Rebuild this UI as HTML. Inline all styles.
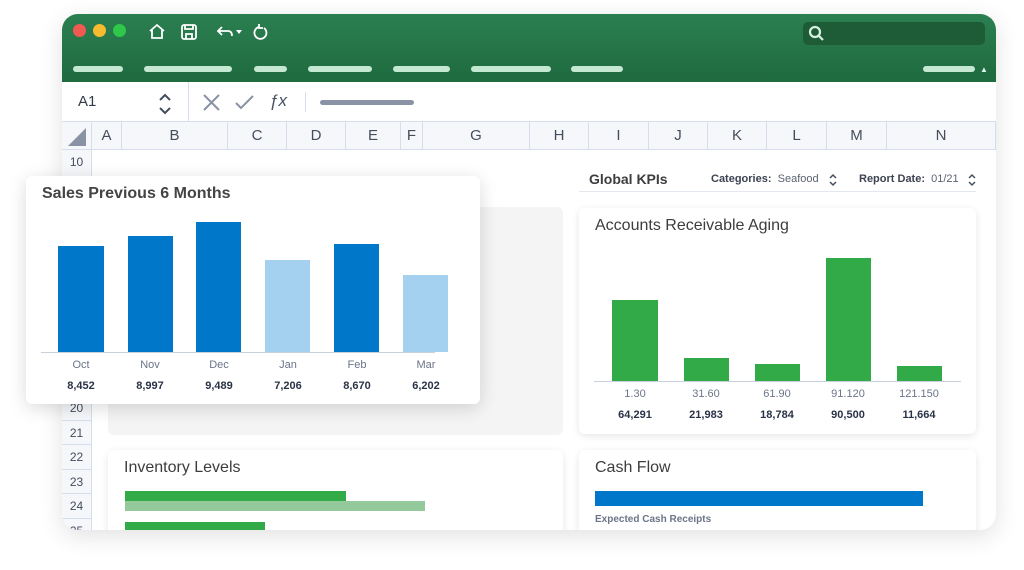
<!DOCTYPE html>
<html><head><meta charset="utf-8"><style>
*{margin:0;padding:0;box-sizing:border-box}
body{width:1024px;height:570px;background:#fff;position:relative;overflow:hidden;font-family:"Liberation Sans",sans-serif}
.a{position:absolute}
.win{left:62px;top:14px;width:934px;height:516px;border-radius:16px;background:#fff;box-shadow:0 6px 24px rgba(0,0,0,.12);overflow:hidden}
.hdr{left:0;top:0;width:934px;height:68px;background:linear-gradient(#2b7f51,#1f6a3f)}
.pill{height:6px;border-radius:3px;background:#c4e8d1;top:52px}
.col{top:108px;height:28px;border-right:1px solid #d6deeb;border-bottom:1px solid #d6deeb;background:#f5f7fb;font-size:15px;color:#444d5c;text-align:center;line-height:28px}
.rn{left:0;width:30px;height:24.5px;border-right:1px solid #d6deeb;border-bottom:1px solid #d6deeb;background:#f5f7fb;font-size:12px;color:#444d5c;text-align:center;line-height:24px}
.card{background:#fff;border-radius:6px;box-shadow:0 2px 8px rgba(0,0,0,.1)}
.t{font-size:16px;color:#3d3d3d}
.bar{position:absolute}
.lab{position:absolute;font-size:11px;color:#6b7488;text-align:center;width:70px}
.val{position:absolute;font-size:11px;font-weight:bold;color:#2a3346;text-align:center;width:70px}
</style></head><body>
<div class="a win">
 <div class="a hdr">
  <div class="a" style="left:11px;top:10px;width:13px;height:13px;border-radius:50%;background:#f05a52"></div>
  <div class="a" style="left:31px;top:10px;width:13px;height:13px;border-radius:50%;background:#f6bb2f"></div>
  <div class="a" style="left:51px;top:10px;width:13px;height:13px;border-radius:50%;background:#2fc84a"></div>
  <svg class="a" style="left:86px;top:8px" width="130" height="20" fill="none" stroke="#fff" stroke-width="1.8">
   <path d="M2 9 L9 3 L16 9 M4 8 V16 H14 V8"/>
   <rect x="34" y="3" width="14" height="14" rx="2"/><path d="M37 3 V7 H45 V3 M38 17 V12 H44 V17"/>
   <path d="M74 5 L70 9 L74 13 M70 9 H80 Q84 9 84 14"/><path d="M88 8 L94 8 L91 12 Z" fill="#fff" stroke="none"/>
   <path d="M111 5 A6 6 0 1 0 116 6 M111 2 V6 H115"/>
  </svg>
  <div class="a" style="left:741px;top:8px;width:182px;height:23px;border-radius:5px;background:#1e5c38"></div>
  <svg class="a" style="left:746px;top:11px" width="18" height="18" fill="none" stroke="#d8f0e0" stroke-width="2.2"><circle cx="7" cy="7" r="5"/><path d="M11 11 L15 15"/></svg>
  <div class="a pill" style="left:11px;width:50px"></div>
  <div class="a pill" style="left:82px;width:88px"></div>
  <div class="a pill" style="left:192px;width:33px"></div>
  <div class="a pill" style="left:246px;width:64px"></div>
  <div class="a pill" style="left:331px;width:57px"></div>
  <div class="a pill" style="left:409px;width:80px"></div>
  <div class="a pill" style="left:509px;width:52px"></div>
  <div class="a pill" style="left:861px;width:52px"></div>
  <div class="a" style="left:918px;top:51px;font-size:8px;color:#e0f2e7">▲</div>
 </div>
 <div class="a" style="left:0;top:68px;width:934px;height:40px;border-bottom:1px solid #d6deeb"></div>
 <div class="a" style="left:16px;top:79px;font-size:15px;color:#333b49">A1</div>
 <svg class="a" style="left:96px;top:78px" width="14" height="24" fill="none" stroke="#454e5e" stroke-width="2"><path d="M2 8 L7 3 L12 8 M2 16 L7 21 L12 16"/></svg>
 <div class="a" style="left:126px;top:68px;width:1px;height:40px;background:#d6deeb"></div>
 <svg class="a" style="left:140px;top:78px" width="90" height="22" fill="none" stroke="#8a93a3" stroke-width="2"><path d="M2 3 L17 18 M17 3 L2 18"/><path d="M34 11 L39 16 L51 4"/></svg>
 <div class="a" style="left:207px;top:77px;font-size:17px;color:#4a5262;font-style:italic">ƒx</div>
 <div class="a" style="left:243px;top:78px;width:1px;height:20px;background:#d6deeb"></div>
 <div class="a" style="left:258px;top:86px;width:94px;height:5px;border-radius:3px;background:#8a93a6"></div>
 <div class="a col" style="left:0;width:30px"><svg width="30" height="28"><path d="M6 24 L24 24 L24 6 Z" fill="#8a93a3"/></svg></div>
 <div class="a col" style="left:30px;width:30px">A</div>
 <div class="a col" style="left:60px;width:106px">B</div>
 <div class="a col" style="left:166px;width:59px">C</div>
 <div class="a col" style="left:225px;width:59px">D</div>
 <div class="a col" style="left:284px;width:55px">E</div>
 <div class="a col" style="left:339px;width:22px">F</div>
 <div class="a col" style="left:361px;width:107px">G</div>
 <div class="a col" style="left:468px;width:59px">H</div>
 <div class="a col" style="left:527px;width:60px">I</div>
 <div class="a col" style="left:587px;width:59px">J</div>
 <div class="a col" style="left:646px;width:59px">K</div>
 <div class="a col" style="left:705px;width:60px">L</div>
 <div class="a col" style="left:765px;width:60px">M</div>
 <div class="a col" style="left:825px;width:109px">N</div>
 <div class="a rn" style="top:136px">10</div>
 <div class="a rn" style="top:160px;height:222px"></div>
 <div class="a rn" style="top:382px">20</div>
 <div class="a rn" style="top:406.5px">21</div>
 <div class="a rn" style="top:431px">22</div>
 <div class="a rn" style="top:455.5px">23</div>
 <div class="a rn" style="top:480px">24</div>
 <div class="a rn" style="top:504.5px">25</div>
 <div class="a" style="left:46px;top:193px;width:455px;height:228px;background:#f4f4f5;border-radius:6px"></div>
 <div class="a" style="left:527px;top:157px;font-size:14px;font-weight:bold;color:#3d3d3d">Global KPIs</div>
 <div class="a" style="left:649px;top:159px;font-size:11px;color:#3d4352"><b>Categories:</b>&nbsp;&nbsp;<span style="color:#5b6270">Seafood</span></div>
 <div class="a" style="left:797px;top:159px;font-size:11px;color:#3d4352"><b>Report Date:</b>&nbsp;&nbsp;<span style="color:#5b6270">01/21</span></div>
 <svg class="a" style="left:766px;top:158px" width="10" height="16" fill="none" stroke="#454e5e" stroke-width="1.5"><path d="M2 6 L5 3 L8 6 M2 10 L5 13 L8 10"/></svg>
 <svg class="a" style="left:905px;top:158px" width="10" height="16" fill="none" stroke="#454e5e" stroke-width="1.5"><path d="M2 6 L5 3 L8 6 M2 10 L5 13 L8 10"/></svg>
 <div class="a" style="left:517px;top:177px;width:397px;height:1px;background:#e3e7ee"></div>
 <div class="a card" style="left:517px;top:194px;width:397px;height:226px">
  <div class="a t" style="left:16px;top:9px">Accounts Receivable Aging</div>
  <div class="bar" style="left:33px;top:92px;width:46px;height:81px;background:#33aa48"></div>
  <div class="bar" style="left:105px;top:150px;width:45px;height:23px;background:#33aa48"></div>
  <div class="bar" style="left:176px;top:156px;width:45px;height:17px;background:#33aa48"></div>
  <div class="bar" style="left:247px;top:50px;width:45px;height:123px;background:#33aa48"></div>
  <div class="bar" style="left:318px;top:158px;width:45px;height:15px;background:#33aa48"></div>
  <div class="a" style="left:15px;top:173px;width:367px;height:1px;background:#c8d0dc"></div>
  <div class="lab" style="left:21px;top:180px">1.30</div><div class="val" style="left:21px;top:201px">64,291</div>
  <div class="lab" style="left:92px;top:180px">31.60</div><div class="val" style="left:92px;top:201px">21,983</div>
  <div class="lab" style="left:163px;top:180px">61.90</div><div class="val" style="left:163px;top:201px">18,784</div>
  <div class="lab" style="left:234px;top:180px">91.120</div><div class="val" style="left:234px;top:201px">90,500</div>
  <div class="lab" style="left:305px;top:180px">121.150</div><div class="val" style="left:305px;top:201px">11,664</div>
 </div>
 <div class="a card" style="left:46px;top:436px;width:455px;height:100px">
  <div class="a t" style="left:16px;top:9px">Inventory Levels</div>
  <div class="bar" style="left:17px;top:41px;width:221px;height:10px;background:#33aa48"></div>
  <div class="bar" style="left:17px;top:51px;width:300px;height:10px;background:#94c99b"></div>
  <div class="bar" style="left:17px;top:72px;width:140px;height:10px;background:#33aa48"></div>
 </div>
 <div class="a card" style="left:517px;top:436px;width:397px;height:100px">
  <div class="a t" style="left:16px;top:9px">Cash Flow</div>
  <div class="bar" style="left:16px;top:41px;width:328px;height:15px;background:#0077c8"></div>
  <div class="a" style="left:16px;top:64px;font-size:10px;font-weight:bold;color:#6b7488">Expected Cash Receipts</div>
 </div>
</div>
<div class="a card" style="left:26px;top:176px;width:454px;height:228px;box-shadow:0 4px 18px rgba(0,0,0,.15)">
 <div class="a t" style="left:16px;top:9px;font-weight:bold;color:#444">Sales Previous 6 Months</div>
 <div class="bar" style="left:32px;top:70px;width:46px;height:106px;background:#0077c8"></div>
 <div class="bar" style="left:102px;top:60px;width:45px;height:116px;background:#0077c8"></div>
 <div class="bar" style="left:170px;top:46px;width:45px;height:130px;background:#0077c8"></div>
 <div class="bar" style="left:239px;top:84px;width:45px;height:92px;background:#a4d1ef"></div>
 <div class="bar" style="left:308px;top:68px;width:45px;height:108px;background:#0077c8"></div>
 <div class="bar" style="left:377px;top:99px;width:45px;height:77px;background:#a4d1ef"></div>
 <div class="a" style="left:15px;top:176px;width:394px;height:1px;background:#c8d0dc"></div>
 <div class="lab" style="left:20px;top:183px">Oct</div><div class="val" style="left:20px;top:204px">8,452</div>
 <div class="lab" style="left:89px;top:183px">Nov</div><div class="val" style="left:89px;top:204px">8,997</div>
 <div class="lab" style="left:158px;top:183px">Dec</div><div class="val" style="left:158px;top:204px">9,489</div>
 <div class="lab" style="left:227px;top:183px">Jan</div><div class="val" style="left:227px;top:204px">7,206</div>
 <div class="lab" style="left:296px;top:183px">Feb</div><div class="val" style="left:296px;top:204px">8,670</div>
 <div class="lab" style="left:365px;top:183px">Mar</div><div class="val" style="left:365px;top:204px">6,202</div>
</div>
</body></html>
